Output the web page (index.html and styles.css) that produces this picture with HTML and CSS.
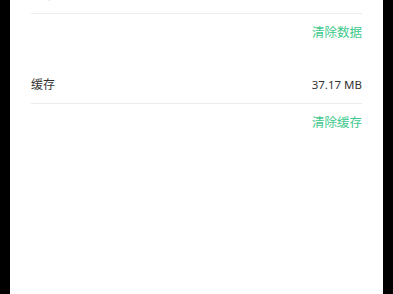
FILE: index.html
```html
<!DOCTYPE html>
<html lang="zh-CN">
<head>
    <meta charset="UTF-8">
    <meta name="viewport" content="width=device-width, initial-scale=1.0">
    <title>存储</title>
    <link rel="stylesheet" href="styles.css">
</head>
<body>
    <div class="panel">
        <div class="storage-list">
            <div class="section">
                <div class="row">
                    <span class="label">数据</span>
                    <span class="value">12.48 MB</span>
                </div>
                <div class="action">
                    <a href="#" class="action-link">清除数据</a>
                </div>
            </div>
            <div class="section">
                <div class="row">
                    <span class="label">缓存</span>
                    <span class="value">37.17 MB</span>
                </div>
                <div class="action">
                    <a href="#" class="action-link">清除缓存</a>
                </div>
            </div>
        </div>
    </div>
</body>
</html>
```

FILE: styles.css
```css
html, body {
    margin: 0;
    padding: 0;
    height: 100%;
    background-color: #000;
}
body {
    font-family: "Noto Sans", "Noto Sans CJK SC", sans-serif;
    overflow: hidden;
}
.panel {
    background-color: #fff;
    margin: 0 10px;
    height: 100%;
    padding: 0 21px;
    overflow: hidden;
}
.storage-list {
    margin-top: -25px;
}
.section {
    margin-bottom: 17px;
}
.row {
    display: flex;
    justify-content: space-between;
    align-items: center;
    height: 38px;
    border-bottom: 1px solid #ececec;
    font-size: 12px;
    color: #333;
}
.value {
    font-size: 11.5px;
}
.action {
    display: flex;
    justify-content: flex-end;
    align-items: center;
    height: 34px;
}
.action-link {
    color: #3cc98b;
    font-size: 12.5px;
    text-decoration: none;
}
```
